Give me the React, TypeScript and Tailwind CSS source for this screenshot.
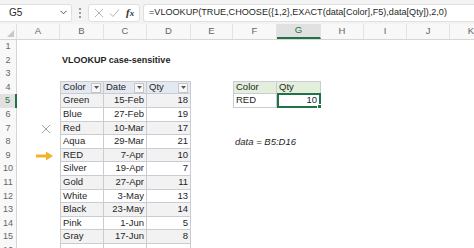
import React from "react";

const COLS = [
  { id: "A", w: 43 },
  { id: "B", w: 44 },
  { id: "C", w: 43 },
  { id: "D", w: 44 },
  { id: "E", w: 42 },
  { id: "F", w: 44 },
  { id: "G", w: 44 },
  { id: "H", w: 43 },
  { id: "I", w: 43 },
  { id: "J", w: 43 },
  { id: "K", w: 43 },
];

const ROW_H = [14, 13, 14, 13, 14, 14, 13, 14, 13, 14, 14, 13, 14, 13, 14, 14];

const DATA = [
  ["Green", "15-Feb", 18],
  ["Blue", "27-Feb", 19],
  ["Red", "10-Mar", 17],
  ["Aqua", "29-Mar", 21],
  ["RED", "7-Apr", 10],
  ["Silver", "19-Apr", 7],
  ["Gold", "27-Apr", 11],
  ["White", "3-May", 13],
  ["Black", "23-May", 14],
  ["Pink", "1-Jun", 5],
  ["Gray", "17-Jun", 8],
  ["", "", ""],
];

function Dropdown() {
  return (
    <span className="absolute right-[2px] top-1/2 -translate-y-1/2 w-[10px] h-[10px] border border-[#c6c6c6] bg-[#f7f7f7] flex items-center justify-center">
      <svg width="5" height="3" viewBox="0 0 5 3">
        <path d="M0 0h5L2.5 3z" fill="#555" />
      </svg>
    </span>
  );
}

type CellSpec = {
  text?: React.ReactNode;
  align?: "left" | "right";
  cls?: string;
  dd?: boolean;
};

function cellFor(row: number, col: string): CellSpec | null {
  if (row === 2 && col === "B")
    return { text: <span className="font-bold whitespace-nowrap text-[9px]">VLOOKUP case-sensitive</span>, cls: "overflow-visible" };
  if (row === 4) {
    if (col === "B") return { text: "Color", cls: "bg-[#e4e9f1] border border-[#c9ccd2]", dd: true };
    if (col === "C") return { text: "Date", cls: "bg-[#e4e9f1] border border-[#c9ccd2] border-l-0", dd: true };
    if (col === "D") return { text: "Qty", cls: "bg-[#e4e9f1] border border-[#c9ccd2] border-l-0", dd: true };
    if (col === "F") return { text: "Color", cls: "bg-[#e3efda] border border-[#c9ccd2]" };
    if (col === "G") return { text: "Qty", cls: "bg-[#e3efda] border border-[#c9ccd2] border-l-0" };
  }
  if (row === 5 && col === "F") return { text: "RED", cls: "border border-t-0 border-[#c9ccd2]" };
  if (row === 5 && col === "G")
    return { text: "10", align: "right", cls: "border-2 border-[#217346] -mt-[1px]" };
  if (row === 8 && col === "F")
    return { text: <span className="italic whitespace-nowrap">data = B5:D16</span>, cls: "overflow-visible" };
  if (row >= 5 && row <= 16) {
    const d = DATA[row - 5];
    const band = row % 2 === 1 ? "bg-[#f2f2f2]" : "bg-white";
    if (col === "B") return { text: d[0], cls: `${band} border border-t-0 border-[#c9ccd2]` };
    if (col === "C") return { text: d[1], align: "right", cls: `${band} border-b border-r border-[#c9ccd2]` };
    if (col === "D") return { text: String(d[2]), align: "right", cls: `${band} border-b border-r border-[#c9ccd2]` };
  }
  return null;
}

export default function App() {
  return (
    <div className="w-[474px] h-[248px] overflow-hidden bg-white font-['Liberation_Sans',sans-serif] text-[#1f1f1f] select-none">
      {/* Formula bar */}
      <div className="h-[24px] bg-[#f3f3f3] flex items-center pt-[1px]">
        <div className="w-[72px] h-[18px] bg-white border border-l-0 border-[#e0e0e0] rounded-r-[3px] flex items-center justify-between pl-[9px] pr-[4px] text-[10px]">
          <span>G5</span>
          <svg width="7" height="5" viewBox="0 0 7 5">
            <path d="M0.5 0.8L3.5 3.8L6.5 0.8" stroke="#555" strokeWidth="1" fill="none" />
          </svg>
        </div>
        <div className="w-[16px] flex flex-col items-center gap-[2px]">
          <span className="w-[2px] h-[2px] bg-[#9a9a9a]" />
          <span className="w-[2px] h-[2px] bg-[#9a9a9a]" />
          <span className="w-[2px] h-[2px] bg-[#9a9a9a]" />
        </div>
        <div className="w-[52px] h-[18px] bg-white border border-[#e0e0e0] rounded-[3px] flex items-center justify-around px-[2px]">
          <svg width="10" height="10" viewBox="0 0 10 10">
            <path d="M1 1L9 9M9 1L1 9" stroke="#b5b5b5" strokeWidth="1" />
          </svg>
          <svg width="11" height="10" viewBox="0 0 11 10">
            <path d="M1 5.5L4 8.5L10 1.5" stroke="#b5b5b5" strokeWidth="1" fill="none" />
          </svg>
          <span className="font-['Liberation_Serif',serif] italic font-bold text-[11px] text-[#333]">
            f<span className="text-[9px]">x</span>
          </span>
        </div>
        <div className="ml-[3px] flex-1 h-[18px] bg-white border border-r-0 border-[#e0e0e0] rounded-l-[3px] flex items-center pl-[5px] text-[9.1px] whitespace-nowrap">
          =VLOOKUP(TRUE,CHOOSE({"{"}1,2{"}"},EXACT(data[Color],F5),data[Qty]),2,0)
        </div>
      </div>

      {/* Column headers */}
      <div className="h-[16px] flex bg-[#f8f8f8] border-b border-[#d6d6d6] text-[9.5px] text-[#666]">
        <div className="w-[17px] shrink-0 relative border-r border-[#e0e0e0]">
          <svg className="absolute right-[2px] bottom-[2px]" width="7" height="7" viewBox="0 0 7 7">
            <path d="M7 0V7H0z" fill="#c8c8c8" />
          </svg>
        </div>
        {COLS.map((c) => (
          <div
            key={c.id}
            style={{ width: c.w }}
            className={`shrink-0 flex items-center justify-center border-r border-[#e3e3e3] ${
              c.id === "G" ? "bg-[#e1e1e1] border-b-2 border-b-[#217346] text-[#217346]" : ""
            }`}
          >
            {c.id}
          </div>
        ))}
      </div>

      {/* Grid rows */}
      {ROW_H.map((h, i) => {
        const row = i + 1;
        return (
          <div key={row} className="flex relative" style={{ height: h }}>
            <div
              className={`w-[17px] shrink-0 flex items-center justify-center text-[9px] text-[#666] border-r ${
                row === 5 ? "bg-[#e1e1e1] border-r-2 border-r-[#217346] text-[#217346]" : "bg-[#f8f8f8] border-[#d6d6d6]"
              }`}
            >
              {row}
            </div>
            {COLS.map((c) => {
              const spec = cellFor(row, c.id);
              return (
                <div
                  key={c.id}
                  style={{ width: c.w }}
                  className={`shrink-0 relative flex items-center text-[9.5px] px-[2px] ${
                    spec?.align === "right" ? "justify-end" : "justify-start"
                  } ${spec?.cls ?? "overflow-hidden"}`}
                >
                  {spec?.text}
                  {spec?.dd && <Dropdown />}
                  {row === 5 && c.id === "G" && (
                    <span className="absolute -right-[3px] -bottom-[3px] w-[5px] h-[5px] bg-[#217346] border border-white" />
                  )}
                  {row === 7 && c.id === "A" && (
                    <svg className="absolute left-[24px] top-1/2 -translate-y-1/2" width="10" height="10" viewBox="0 0 10 10">
                      <path d="M1 1L9 9M9 1L1 9" stroke="#a6a6a6" strokeWidth="1" />
                    </svg>
                  )}
                  {row === 9 && c.id === "A" && (
                    <svg className="absolute left-[19px] top-1/2 -translate-y-1/2" width="18" height="10" viewBox="0 0 18 10">
                      <path d="M0 3.5H10V0.5L17 5L10 9.5V6.5H0z" fill="#f2b32b" />
                    </svg>
                  )}
                </div>
              );
            })}
          </div>
        );
      })}
    </div>
  );
}
